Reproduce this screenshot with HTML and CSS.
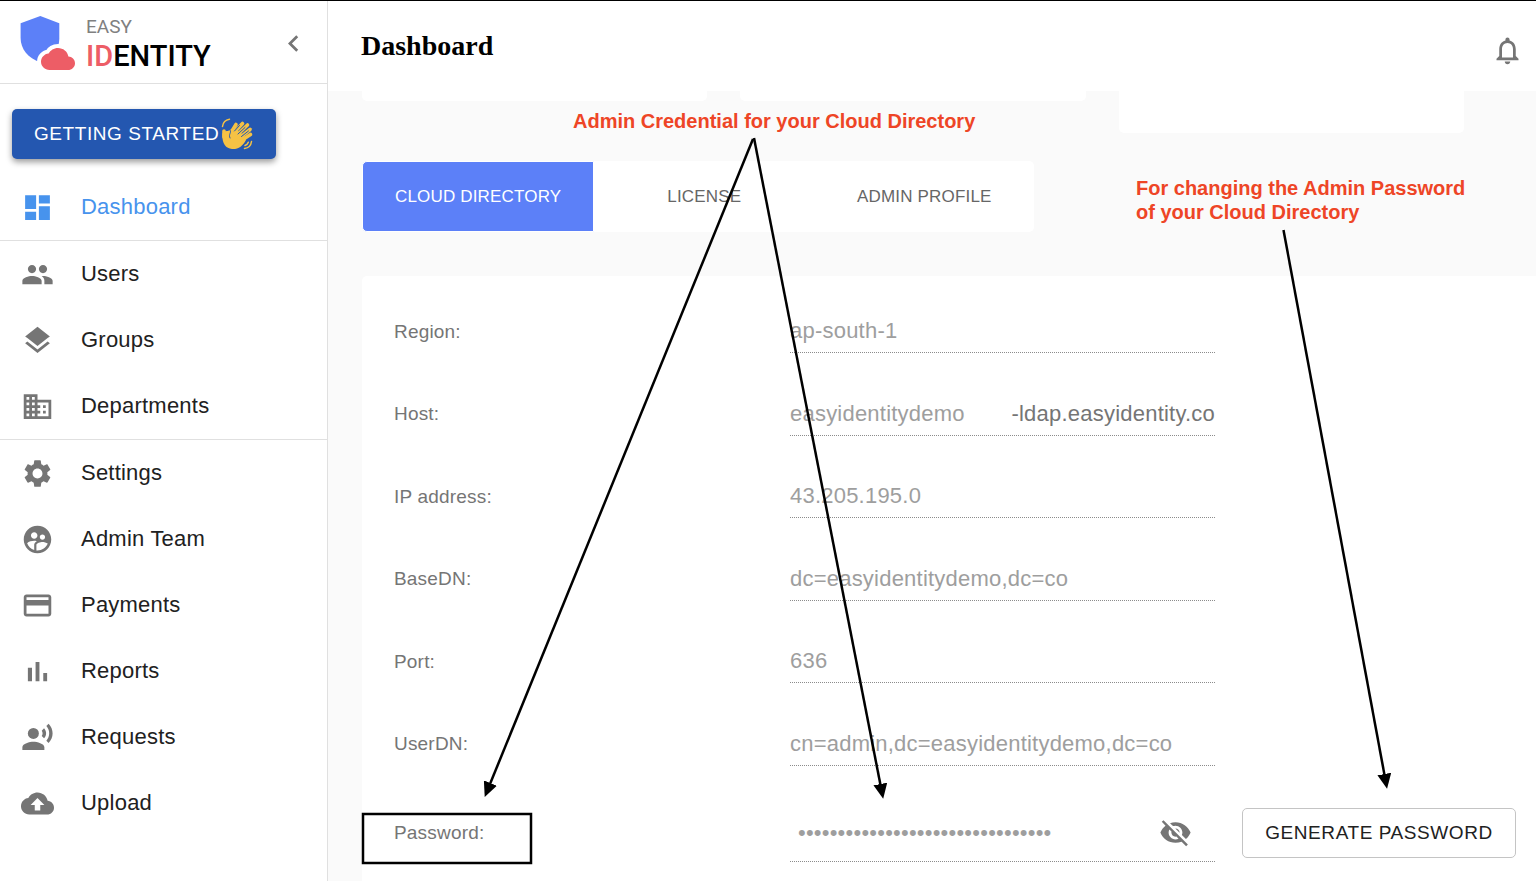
FILE: index.html
```html
<!DOCTYPE html>
<html lang="en">
<head>
    <meta charset="UTF-8">
    <meta name="viewport" content="width=device-width, initial-scale=1.0">
    <title>Dashboard - Easy Identity</title>
    <link rel="stylesheet" href="styles.css">
</head>
<body>

    <aside class="sidebar">
        <div class="brand">
            <svg class="brand-logo" viewBox="0 0 62 62" aria-hidden="true">
                <path fill="#5c80f8" d="M24.3 4L43.3 11.2V27C43.3 37 36 46 24.3 50.500C12 46 4.600 37 4.600 26V11.200z"/>
                <path fill="#ed5d66" stroke="#fff" stroke-width="8" stroke-linejoin="round" paint-order="stroke" d="M52.400 44.500C51.500 39.500 47.200 36 42 36C37.900 36 34.400 38.300 32.600 41.600C28.300 42 25 45.600 25 49.800C25 54.400 28.800 58 33.500 58H52C55.900 58 59 55 59 51.200C59 47.500 56 44.700 52.400 44.500z"/>
            </svg>
            <div class="brand-name">
                <span class="brand-easy">EASY</span>
                <span class="brand-identity"><span class="brand-id">ID</span>ENTITY</span>
            </div>
            <button class="icon-btn" type="button" aria-label="Collapse menu">
                <svg class="icon" viewBox="0 0 24 24"><path d="M15.41 7.41L14 6l-6 6 6 6 1.41-1.41L10.83 12z"/></svg>
            </button>
        </div>

        <button class="start-btn" type="button">
            Getting Started
            <svg class="wave" viewBox="0 0 32 32" aria-hidden="true">
                <g fill="none" stroke="#f6c244" stroke-width="3.600" stroke-linecap="round">
                    <path d="M8 18L15 6.500"/>
                    <path d="M10 18L21.500 5.500"/>
                    <path d="M13 20L26.500 7"/>
                    <path d="M16 22L29 11.500"/>
                    <path d="M18 24L29.500 16.500"/>
                    <path d="M3 19V13"/>
                </g>
                <path fill="#f6c244" d="M1.300 16C3 12 6 14 9 12L12 10L23 17L25 22C22 28 17 31.500 11 31C5 30.500 1 26 1.300 16z"/>
                <path fill="none" stroke="#2457b0" stroke-width="1" stroke-linecap="round" d="M9 12C11 15 7 16 9 20M13.500 13L18.500 7.500M17 16L24 9.500M20.500 18.500L27.500 13"/>
                <path fill="none" stroke="#f6c244" stroke-width="1.500" stroke-linecap="round" d="M1.500 8.500C2 4.500 4.500 1.800 8.500 1.200M23.500 30.500C27.500 30 30 27.500 30.500 23.500M24 27.500C25.500 27 26.800 25.700 27.300 24.200"/>
            </svg>
        </button>

        <nav class="menu">
            <div class="menu-group">
                <a class="menu-item active" href="#dashboard">
                    <svg class="icon" viewBox="0 0 24 24"><path d="M3 13h8V3H3v10zm0 8h8v-6H3v6zm10 0h8V11h-8v10zm0-18v6h8V3h-8z"/></svg>
                    Dashboard
                </a>
            </div>
            <div class="menu-group">
                <a class="menu-item" href="#users">
                    <svg class="icon" viewBox="0 0 24 24"><path d="M16 11c1.66 0 2.99-1.34 2.99-3S17.66 5 16 5c-1.66 0-3 1.34-3 3s1.34 3 3 3zm-8 0c1.66 0 2.99-1.34 2.99-3S9.66 5 8 5C6.34 5 5 6.34 5 8s1.34 3 3 3zm0 2c-2.33 0-7 1.17-7 3.5V19h14v-2.5c0-2.33-4.67-3.5-7-3.5zm8 0c-.29 0-.62.02-.97.05 1.16.84 1.97 1.97 1.97 3.45V19h6v-2.5c0-2.33-4.67-3.5-7-3.5z"/></svg>
                    Users
                </a>
                <a class="menu-item" href="#groups">
                    <svg class="icon" viewBox="0 0 24 24"><path d="M11.99 18.54l-7.37-5.73L3 14.07l9 7 9-7-1.63-1.27-7.38 5.74zM12 16l7.36-5.73L21 9l-9-7-9 7 1.63 1.27L12 16z"/></svg>
                    Groups
                </a>
                <a class="menu-item" href="#departments">
                    <svg class="icon" viewBox="0 0 24 24"><path d="M12 7V3H2v18h20V7H12zM6 19H4v-2h2v2zm0-4H4v-2h2v2zm0-4H4V9h2v2zm0-4H4V5h2v2zm4 12H8v-2h2v2zm0-4H8v-2h2v2zm0-4H8V9h2v2zm0-4H8V5h2v2zm10 12h-8v-2h2v-2h-2v-2h2v-2h-2V9h8v10zm-2-8h-2v2h2v-2zm0 4h-2v2h2v-2z"/></svg>
                    Departments
                </a>
            </div>
            <div class="menu-group">
                <a class="menu-item" href="#settings">
                    <svg class="icon" viewBox="0 0 24 24"><path d="M19.14 12.94c.04-.3.06-.61.06-.94 0-.32-.02-.64-.07-.94l2.03-1.58c.18-.14.23-.41.12-.61l-1.92-3.32c-.12-.22-.37-.29-.59-.22l-2.39.96c-.5-.38-1.03-.7-1.62-.94l-.36-2.54c-.04-.24-.24-.41-.48-.41h-3.84c-.24 0-.43.17-.47.41l-.36 2.54c-.59.24-1.13.57-1.62.94l-2.39-.96c-.22-.08-.47 0-.59.22L2.74 8.87c-.12.21-.08.47.12.61l2.03 1.58c-.05.3-.09.63-.09.94s.02.64.07.94l-2.03 1.58c-.18.14-.23.41-.12.61l1.92 3.32c.12.22.37.29.59.22l2.39-.96c.5.38 1.03.7 1.62.94l.36 2.54c.05.24.24.41.48.41h3.84c.24 0 .44-.17.47-.41l.36-2.54c.59-.24 1.13-.56 1.62-.94l2.39.96c.22.08.47 0 .59-.22l1.92-3.32c.12-.22.07-.47-.12-.61l-2.01-1.58zM12 15.6c-1.98 0-3.6-1.62-3.6-3.6s1.62-3.6 3.6-3.6 3.6 1.62 3.6 3.6-1.62 3.6-3.6 3.6z"/></svg>
                    Settings
                </a>
                <a class="menu-item" href="#admin-team">
                    <svg class="icon" viewBox="0 0 24 24"><path d="M11.99 2c-5.52 0-10 4.48-10 10s4.48 10 10 10 10-4.48 10-10-4.48-10-10-10zm3.61 6.34c1.07 0 1.93.86 1.93 1.93 0 1.07-.86 1.93-1.93 1.93-1.07 0-1.93-.86-1.93-1.93-.01-1.07.86-1.93 1.93-1.93zm-6-1.58c1.3 0 2.36 1.06 2.36 2.36 0 1.3-1.06 2.36-2.36 2.36s-2.36-1.06-2.36-2.36c0-1.31 1.05-2.36 2.36-2.36zm0 9.13v3.75c-2.4-.75-4.3-2.6-5.14-4.96 1.05-1.12 3.67-1.69 5.14-1.69.53 0 1.2.08 1.9.22-1.64.87-1.9 2.02-1.9 2.68zM11.99 20c-.27 0-.53-.01-.79-.04v-4.07c0-1.42 2.94-2.13 4.4-2.13 1.07 0 2.92.39 3.84 1.15-1.17 2.97-4.06 5.09-7.45 5.09z"/></svg>
                    Admin Team
                </a>
                <a class="menu-item" href="#payments">
                    <svg class="icon" viewBox="0 0 24 24"><path d="M20 4H4c-1.11 0-1.99.89-1.99 2L2 18c0 1.11.89 2 2 2h16c1.11 0 2-.89 2-2V6c0-1.11-.89-2-2-2zm0 14H4v-6h16v6zm0-10H4V6h16v2z"/></svg>
                    Payments
                </a>
                <a class="menu-item" href="#reports">
                    <svg class="icon" viewBox="0 0 24 24"><path d="M5 9.2h3V19H5zM10.6 5h2.8v14h-2.8zm5.6 8H19v6h-2.8z"/></svg>
                    Reports
                </a>
                <a class="menu-item" href="#requests">
                    <svg class="icon" viewBox="0 0 24 24"><circle cx="9" cy="9" r="4"/><path d="M9 15c-2.67 0-8 1.34-8 4v2h16v-2c0-2.66-5.33-4-8-4zm7.76-9.64l-1.68 1.69c.84 1.18.84 2.71 0 3.89l1.68 1.69c2.02-2.02 2.02-5.07 0-7.27zM20.07 2l-1.63 1.63c2.77 3.02 2.77 7.56 0 10.74L20.07 16c3.9-3.89 3.91-9.95 0-14z"/></svg>
                    Requests
                </a>
                <a class="menu-item" href="#upload">
                    <svg class="icon" viewBox="0 0 24 24"><path d="M19.35 10.04C18.67 6.59 15.64 4 12 4 9.11 4 6.6 5.64 5.35 8.04 2.34 8.36 0 10.91 0 14c0 3.31 2.69 6 6 6h13c2.76 0 5-2.24 5-5 0-2.64-2.05-4.78-4.65-4.96zM14 13v4h-4v-4H7l5-5 5 5h-3z"/></svg>
                    Upload
                </a>
            </div>
        </nav>
    </aside>

    <main class="main">
        <header class="topbar">
            <h1>Dashboard</h1>
            <button class="icon-btn" type="button" aria-label="Notifications">
                <svg class="icon" viewBox="0 0 24 24"><path d="M12 22c1.1 0 2-.9 2-2h-4c0 1.1.89 2 2 2zm6-6v-5c0-3.07-1.64-5.64-4.5-6.32V4c0-.83-.67-1.5-1.5-1.5s-1.5.67-1.5 1.5v.68C7.63 5.36 6 7.92 6 11v5l-2 2v1h16v-1l-2-2zm-2 1H8v-6c0-2.48 1.51-4.5 4-4.5s4 2.02 4 4.5v6z"/></svg>
            </button>
        </header>

        <!-- bottom edges of the stat cards, scrolled under the top bar -->
        <div class="stats">
            <div class="stat"></div>
            <div class="stat"></div>
            <div class="stat stat-tall"></div>
        </div>

        <div class="tabs" role="tablist">
            <button class="tab selected" type="button" role="tab" aria-selected="true">Cloud Directory</button>
            <button class="tab" type="button" role="tab" aria-selected="false">License</button>
            <button class="tab" type="button" role="tab" aria-selected="false">Admin Profile</button>
        </div>

        <form class="panel">
            <div class="row">
                <label for="region">Region:</label>
                <div class="field"><input id="region" type="text" value="ap-south-1" readonly></div>
            </div>
            <div class="row">
                <label for="host">Host:</label>
                <div class="field">
                    <input id="host" type="text" value="easyidentitydemo" readonly>
                    <span class="suffix">-ldap.easyidentity.co</span>
                </div>
            </div>
            <div class="row">
                <label for="ip">IP address:</label>
                <div class="field"><input id="ip" type="text" value="43.205.195.0" readonly></div>
            </div>
            <div class="row">
                <label for="basedn">BaseDN:</label>
                <div class="field"><input id="basedn" type="text" value="dc=easyidentitydemo,dc=co" readonly></div>
            </div>
            <div class="row">
                <label for="port">Port:</label>
                <div class="field"><input id="port" type="text" value="636" readonly></div>
            </div>
            <div class="row">
                <label for="userdn">UserDN:</label>
                <div class="field"><input id="userdn" type="text" value="cn=admin,dc=easyidentitydemo,dc=co" readonly></div>
            </div>
            <div class="row row-password">
                <label for="password">Password:</label>
                <div class="field field-password">
                    <input id="password" type="password" value="abcdefghijklmnopqrstuvwxyz012345" autocomplete="off" readonly>
                    <button class="icon-btn" type="button" aria-label="Show password">
                        <svg class="icon" viewBox="0 0 24 24"><path d="M12 7c2.76 0 5 2.24 5 5 0 .65-.13 1.26-.36 1.83l2.92 2.92c1.51-1.26 2.7-2.89 3.43-4.75-1.73-4.39-6-7.5-11-7.500-1.400 0-2.740.25-3.980.7l2.160 2.160C10.740 7.130 11.350 7 12 7zM2 4.270l2.280 2.280.46.46C3.080 8.300 1.780 10.020 1 12c1.730 4.390 6 7.500 11 7.500 1.550 0 3.030-.3 4.380-.84l.42.42L19.730 22 21 20.730 3.270 3 2 4.270zM7.530 9.800l1.550 1.550c-.05.21-.08.43-.08.65 0 1.660 1.340 3 3 3 .22 0 .44-.03.65-.08l1.550 1.550c-.67.33-1.410.53-2.200.53-2.760 0-5-2.240-5-5 0-.79.2-1.530.53-2.200zm4.310-.78l3.150 3.150.02-.16c0-1.660-1.340-3-3-3l-.17.01z"/></svg>
                    </button>
                </div>
                <button class="generate-btn" type="button">Generate Password</button>
            </div>
        </form>
    </main>

    <!-- notes and arrows on top of the page -->
    <svg class="arrows" width="1536" height="881" viewBox="0 0 1536 881" aria-hidden="true">
        <defs>
            <marker id="head" markerUnits="userSpaceOnUse" markerWidth="15" markerHeight="14" refX="1" refY="7" orient="auto">
                <path d="M0 0L15 7L0 14z"/>
            </marker>
        </defs>
        <g fill="none" stroke="#000" stroke-width="2.500">
            <path marker-end="url(#head)" d="M753 139L490 784"/>
            <path marker-end="url(#head)" d="M754 138L880.500 785"/>
            <path marker-end="url(#head)" d="M1283.500 230L1384.500 775"/>
            <rect x="363" y="814" width="168" height="49"/>
        </g>
    </svg>
    <p class="note note-credential">Admin Credential for your Cloud Directory</p>
    <p class="note note-change">For changing the Admin Password<br>of your Cloud Directory</p>

</body>
</html>
```

FILE: styles.css
```css
* {
    box-sizing: border-box;
}

body {
    position: relative;
    display: flex;
    min-height: 100vh;
    margin: 0;
    border-top: 1px solid #000;
    background-color: #fafafa;
    color: #212121;
    font-family: "Liberation Sans", Arial, sans-serif;
    font-size: 22px;
    overflow-x: hidden;
}

button, input {
    font-family: inherit;
    border: none;
    background: none;
    padding: 0;
}

button {
    cursor: pointer;
    text-transform: uppercase;
    letter-spacing: 0.03em;
}

.icon {
    display: block;
    width: 33px;
    height: 33px;
    fill: #757575;
}

/* sidebar */
.sidebar {
    flex: none;
    width: 328px;
    border-right: 1px solid #e0e0e0;
    background-color: #fff;
}

.brand {
    display: flex;
    align-items: center;
    height: 83px;
    padding: 2px 17px 0 16px;
    border-bottom: 1px solid #e0e0e0;
}

.brand-logo {
    width: 62px;
    height: 62px;
}

.brand-name {
    display: flex;
    flex-direction: column;
    flex: 1;
    padding-left: 8px;
    font-family: Roboto, sans-serif;
    font-weight: 500;
}

.brand-easy {
    font-size: 19px;
    line-height: 26px;
    font-weight: 400;
    color: #808080;
}

.brand-identity {
    font-size: 29px;
    line-height: 32px;
    color: #000;
}

.brand-id {
    color: #ed5d66;
}

.start-btn {
    display: flex;
    align-items: center;
    width: 264px;
    height: 50px;
    margin: 25px 12px 15px;
    padding: 0 22px;
    border-radius: 5px;
    background-color: #2457b0;
    box-shadow: 0 3px 6px rgba(0, 0, 0, 0.4);
    color: #fff;
    font-size: 19px;
    white-space: nowrap;
}

.wave {
    flex: none;
    width: 32px;
    height: 32px;
    margin-left: 2px;
}

.menu-group + .menu-group {
    border-top: 1px solid #e0e0e0;
}

.menu-item {
    display: flex;
    align-items: center;
    gap: 27px;
    height: 66px;
    padding-left: 21px;
    color: #212121;
    letter-spacing: 0.01em;
    text-decoration: none;
}

.menu-item.active {
    color: #4793ed;
}

.menu-item.active .icon {
    fill: #4793ed;
}

/* main area */
.main {
    flex: 1;
    display: flex;
    flex-direction: column;
    min-width: 0;
}

.topbar {
    display: flex;
    align-items: center;
    justify-content: space-between;
    height: 90px;
    padding: 0 12px 0 33px;
    background-color: #fff;
}

h1 {
    margin: 0;
    color: #000;
    font-family: "Liberation Serif", "Times New Roman", serif;
    font-size: 28px;
    line-height: 32px;
}

.topbar .icon-btn {
    padding-top: 9px;
}

.stats {
    display: grid;
    grid-template-columns: repeat(3, 1fr);
    gap: 33px;
    align-items: start;
    padding: 0 72px 0 34px;
}

.stat {
    height: 10px;
    border-radius: 0 0 5px 5px;
    background-color: #fff;
}

.stat-tall {
    height: 42px;
}

.tabs {
    display: flex;
    align-self: flex-start;
    margin: 28px 0 44px 34px;
    border-radius: 5px;
    background-color: #fff;
}

.tab {
    min-width: 220px;
    height: 71px;
    padding: 0 32px;
    color: #666;
    font-size: 17px;
    letter-spacing: 0.01em;
}

.tab.selected {
    border: 1px solid #fff;
    border-radius: 5px 0 0 5px;
    background-color: #5c80f8;
    color: #fff;
}

.panel {
    flex: 1;
    margin-left: 34px;
    padding: 14px 20px 0 32px;
    border-radius: 5px 0 0 0;
    background-color: #fff;
}

.row {
    display: grid;
    grid-template-columns: 396fr 425fr 301px;
    align-items: center;
    height: 82px;
}

.row:nth-child(odd) {
    height: 83px;
}

.row label {
    color: #757575;
    font-size: 19px;
    letter-spacing: 0.01em;
}

.field {
    display: flex;
    align-items: center;
    min-width: 0;
    height: 43px;
    border-bottom: 1px dotted #8c8c8c;
}

.field input {
    flex: 1;
    width: 100%;
    min-width: 0;
    height: 42px;
    outline: none;
    color: #9e9e9e;
    font-size: 22px;
    letter-spacing: 0.01em;
}

.suffix {
    color: #757575;
    letter-spacing: 0.01em;
}

.row.row-password {
    height: 96px;
}

.field-password {
    height: 58px;
    padding: 0 23px 0 8px;
}

.generate-btn {
    height: 50px;
    margin-left: 27px;
    border: 1px solid #c4c4c4;
    border-radius: 5px;
    color: #212121;
    font-size: 19px;
}

/* notes */
.arrows {
    position: absolute;
    top: -1px;
    left: 0;
    pointer-events: none;
}

.arrows marker path {
    fill: #000;
    stroke: none;
}

.note {
    position: absolute;
    margin: 0;
    color: #ee4526;
    font-size: 20px;
    font-weight: bold;
    line-height: 24px;
    white-space: nowrap;
}

.note-credential {
    top: 108px;
    left: 573px;
}

.note-change {
    top: 175px;
    left: 1136px;
}
```
